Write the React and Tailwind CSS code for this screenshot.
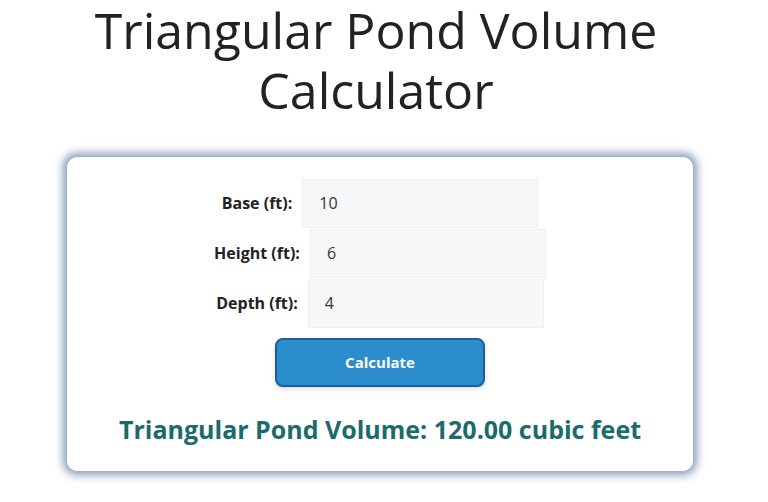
import React, { useState } from "react";

const fields = [
  { key: "base", label: "Base (ft):" },
  { key: "height", label: "Height (ft):" },
  { key: "depth", label: "Depth (ft):" },
];

const App = () => {
  const [values, setValues] = useState({ base: "10", height: "6", depth: "4" });
  const [volume, setVolume] = useState(120);

  const calculate = () => {
    const b = parseFloat(values.base) || 0;
    const h = parseFloat(values.height) || 0;
    const d = parseFloat(values.depth) || 0;
    setVolume(0.5 * b * h * d);
  };

  return (
    <div className="min-h-screen bg-white text-[#222] font-['Open_Sans',sans-serif]">
      <h1 className="text-center text-[50px] leading-[60px] font-normal pl-16 pr-20">
        Triangular Pond Volume Calculator
      </h1>

      <div className="ml-[67px] mr-[75px] mt-[37px] bg-white rounded-[10px] shadow-[0_0_8px_4px_rgba(85,115,155,0.7)] pt-[21px] pb-[22px]">
        {fields.map((f) => (
          <div key={f.key} className="flex justify-center items-center h-[50px]">
            <label className="text-[16px] font-bold mr-[10px]">{f.label}</label>
            <input
              className="w-[236px] h-[49px] bg-[#f6f7f9] border border-[#eef0f2] pl-4 text-[16px] text-[#333] outline-none"
              value={values[f.key]}
              onChange={(e) => setValues({ ...values, [f.key]: e.target.value })}
            />
          </div>
        ))}

        <div className="flex justify-center mt-[10px]">
          <button
            onClick={calculate}
            className="w-[210px] h-[49px] bg-[#2b8dcb] border-2 border-[#1e5d9c] rounded-lg text-white text-[15px] font-bold shadow-[0_2px_4px_rgba(0,0,0,0.15)]"
          >
            Calculate
          </button>
        </div>

        <p className="text-center text-[#1b6b6d] text-[25px] font-bold mt-[24px]">
          Triangular Pond Volume: {volume.toFixed(2)} cubic feet
        </p>
      </div>
    </div>
  );
};

export default App;
